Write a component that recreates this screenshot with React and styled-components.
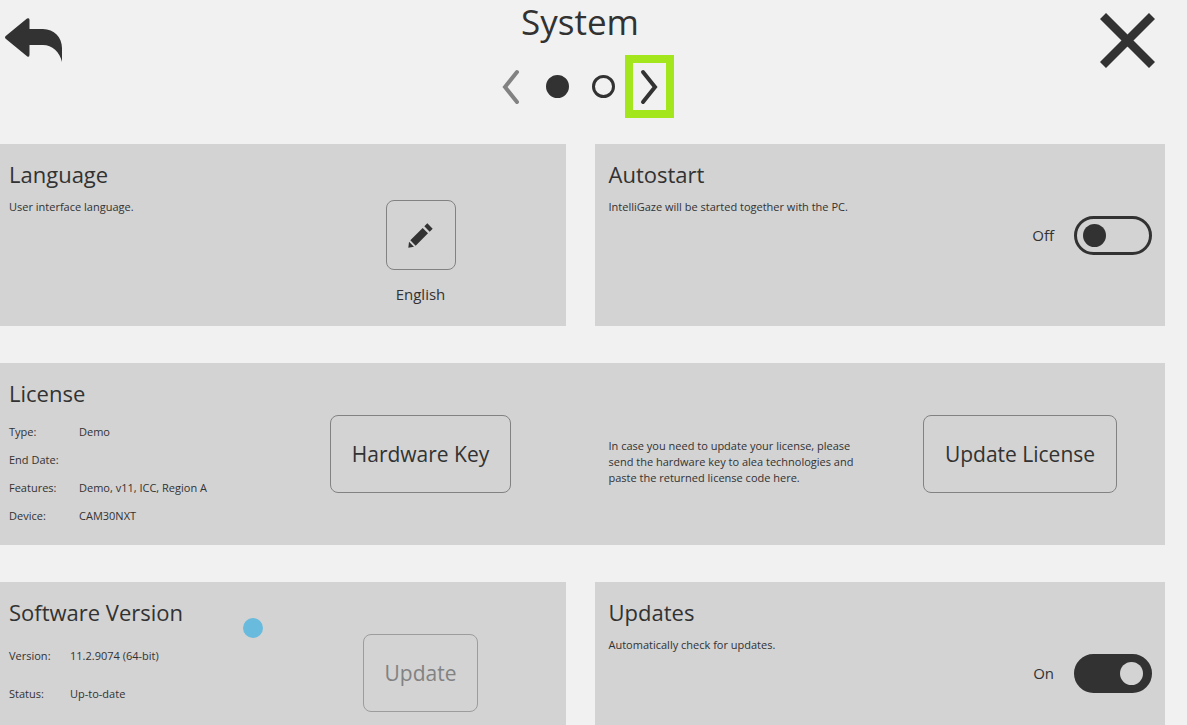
import * as React from "react"
import styled, { createGlobalStyle } from "styled-components"

const GlobalStyle = createGlobalStyle`
  :root {
    --color-page: #f1f1f1;
    --color-card: #d3d3d3;
    --color-ink: #323232;
    --color-muted: #828282;
    --color-highlight: #a4e61c;
    --color-gaze: #69bbdd;
  }

  * {
    box-sizing: border-box;
  }

  body {
    margin: 0;
    background: var(--color-page);
    color: var(--color-ink);
    font-family: "Open Sans", "Noto Sans", sans-serif;
    font-size: 11px;
    line-height: 16px;
  }

  button {
    font-family: inherit;
    color: inherit;
    cursor: pointer;
  }
`

const Page = styled.div`
  position: relative;
  height: 100vh;
  overflow: hidden;
`

const Header = styled.header`
  display: grid;
  grid-template-columns: 1fr auto 1fr;
  align-items: start;
  min-height: 144px;
  padding-right: 27px;
`

const Title = styled.h1`
  margin: 0;
  font-size: 35px;
  line-height: 44px;
  font-weight: 400;
  text-align: center;
`

const IconButton = styled.button`
  display: flex;
  justify-self: ${(props) => props.$side};
  padding: ${(props) => (props.$side === "end" ? "13px 5px" : "18px 5px")};
  border: 0;
  background: none;
`

const Pager = styled.nav`
  display: grid;
  grid-template-columns: repeat(4, 46px);
  place-items: center;
  height: 63px;
  margin-top: 11px;
`

const PagerArrow = styled.button`
  display: flex;
  align-items: center;
  justify-content: center;
  width: 33px;
  height: 47px;
  padding: 0;
  border: 0;
  background: none;
  outline: ${(props) =>
    props.$active ? "8px solid var(--color-highlight)" : "none"};

  &:disabled {
    color: var(--color-muted);
  }
`

const PagerDot = styled.button`
  width: 23px;
  height: 23px;
  padding: 0;
  border: 3px solid var(--color-ink);
  border-radius: 50%;
  background: ${(props) => (props.$current ? "var(--color-ink)" : "none")};
`

const Cards = styled.main`
  display: grid;
  grid-template-columns: 566fr 571fr;
  gap: 37px 29px;
  padding-right: 22px;
`

const Card = styled.section`
  display: grid;
  grid-column: ${(props) => (props.$wide ? "span 2" : "auto")};
  grid-template-columns: ${(props) => (props.$wide ? "subgrid" : "1fr")};
  min-height: 182px;
  background: var(--color-card);
`

const Half = styled.div`
  display: grid;
  grid-template-columns: minmax(0, 1fr) ${(props) =>
      props.$toggle ? "auto" : "290px"};
  padding-left: ${(props) => (props.$right ? "14px" : "9px")};
`

const Info = styled.div`
  padding-top: 15px;
`

const Heading = styled.h2`
  margin: 0 0 10px;
  font-size: 22px;
  line-height: 30px;
  font-weight: 400;
`

const Text = styled.p`
  margin: 0;
`

const Note = styled.p`
  max-width: 255px;
  margin: 0;
  padding-top: 75px;
`

const Details = styled.dl`
  display: grid;
  grid-template-columns: ${(props) => props.$label} 1fr;
  margin: 0;
  line-height: ${(props) => props.$row};

  dd {
    margin: 0;
  }
`

const Action = styled.div`
  display: flex;
  align-items: center;
  justify-content: center;
`

const Choice = styled.div`
  display: flex;
  flex-direction: column;
  align-items: center;
  gap: 12px;
  padding-top: 56px;
  font-size: 15px;
  line-height: 24px;
`

const OutlineButton = styled.button`
  display: flex;
  align-items: center;
  justify-content: center;
  min-width: 70px;
  height: ${(props) => (props.$icon ? "70px" : "78px")};
  padding: 0 21px;
  border: 1px solid var(--color-muted);
  border-radius: 8px;
  background: none;
  font-size: 21px;
  line-height: 30px;

  &:disabled {
    border-color: #9c9c9c;
    color: var(--color-muted);
  }
`

const Toggle = styled.label`
  display: flex;
  align-items: center;
  gap: 20px;
  padding-right: 13px;
  font-size: 15px;
  line-height: 24px;
`

const Switch = styled.input`
  appearance: none;
  display: flex;
  align-items: center;
  width: 78px;
  height: 39px;
  margin: 0;
  padding: 0 6px;
  border: 3px solid var(--color-ink);
  border-radius: 20px;
  cursor: pointer;

  &::before {
    width: 23px;
    height: 23px;
    border-radius: 50%;
    background: var(--color-ink);
    content: "";
  }

  &:checked {
    justify-content: flex-end;
    background: var(--color-ink);
  }

  &:checked::before {
    background: var(--color-card);
  }
`

const GazeCursor = styled.div`
  position: absolute;
  top: 618px;
  left: 243px;
  width: 20px;
  height: 20px;
  border-radius: 50%;
  background: var(--color-gaze);
  pointer-events: none;
`

const BackIcon = () => (
  <svg width="57" height="44" viewBox="0 0 57 44" fill="currentColor">
    <path d="M1 17.800 22 .6Q24.500-.8 24.500 2V11H38C49 11 57 19.500 57 30V44C55 34 47 27 38 27H24.500V36.500Q24.500 40 22 38.200L1 21Q-1 19.400 1 17.800Z" />
  </svg>
)

const CloseIcon = () => (
  <svg width="55" height="55" viewBox="0 0 55 55" stroke="currentColor">
    <path d="M3 3 52 52M52 3 3 52" strokeWidth="8.500" />
  </svg>
)

const Chevron = ({ d }) => (
  <svg
    width="18"
    height="36"
    viewBox="0 0 18 36"
    fill="none"
    stroke="currentColor"
    strokeWidth="4"
    strokeLinecap="round"
  >
    <path d={d} />
  </svg>
)

const PencilIcon = () => (
  <svg width="25" height="25" viewBox="0 0 75 75" fill="currentColor">
    <path d="M58 1 74 17 65 26 49 10ZM44 15 60 31 23 68 7 52ZM3 56 18 71 1 74Z" />
  </svg>
)

const ToggleSetting = ({ id, title, text, initial }) => {
  const [on, setOn] = React.useState(initial)

  return (
    <Card>
      <Half $right $toggle>
        <Info>
          <Heading>{title}</Heading>
          <Text>{text}</Text>
        </Info>
        <Toggle htmlFor={id}>
          {on ? "On" : "Off"}
          <Switch
            id={id}
            type="checkbox"
            checked={on}
            onChange={(e) => setOn(e.target.checked)}
          />
        </Toggle>
      </Half>
    </Card>
  )
}

const DetailList = ({ label, row, items }) => (
  <Details $label={label} $row={row}>
    {items.map(([name, value]) => (
      <React.Fragment key={name}>
        <dt>{name}:</dt>
        <dd>{value}</dd>
      </React.Fragment>
    ))}
  </Details>
)

const license = [
  ["Type", "Demo"],
  ["End Date", ""],
  ["Features", "Demo, v11, ICC, Region A"],
  ["Device", "CAM30NXT"],
]

const software = [
  ["Version", "11.2.9074 (64-bit)"],
  ["Status", "Up-to-date"],
]

const App = () => {
  return (
    <Page>
      <GlobalStyle />
      <Header>
        <IconButton $side="start" aria-label="Back">
          <BackIcon />
        </IconButton>
        <div>
          <Title>System</Title>
          <Pager aria-label="Pages">
            <PagerArrow disabled aria-label="Previous page">
              <Chevron d="M15 3 3 18 15 33" />
            </PagerArrow>
            <PagerDot $current aria-label="Page 1" />
            <PagerDot aria-label="Page 2" />
            <PagerArrow $active aria-label="Next page">
              <Chevron d="M3 3 15 18 3 33" />
            </PagerArrow>
          </Pager>
        </div>
        <IconButton $side="end" aria-label="Close">
          <CloseIcon />
        </IconButton>
      </Header>

      <Cards>
        <Card>
          <Half>
            <Info>
              <Heading>Language</Heading>
              <Text>User interface language.</Text>
            </Info>
            <Choice>
              <OutlineButton $icon aria-label="Change language">
                <PencilIcon />
              </OutlineButton>
              <span>English</span>
            </Choice>
          </Half>
        </Card>

        <ToggleSetting
          id="autostart"
          title="Autostart"
          text="IntelliGaze will be started together with the PC."
          initial={false}
        />

        <Card $wide>
          <Half>
            <Info>
              <Heading>License</Heading>
              <DetailList label="70px" row="28px" items={license} />
            </Info>
            <Action>
              <OutlineButton>Hardware Key</OutlineButton>
            </Action>
          </Half>
          <Half $right>
            <Note>
              In case you need to update your license, please send the hardware
              key to alea technologies and paste the returned license code here.
            </Note>
            <Action>
              <OutlineButton>Update License</OutlineButton>
            </Action>
          </Half>
        </Card>

        <Card>
          <Half>
            <Info>
              <Heading>Software Version</Heading>
              <DetailList label="61px" row="38px" items={software} />
            </Info>
            <Action>
              <OutlineButton disabled>Update</OutlineButton>
            </Action>
          </Half>
        </Card>

        <ToggleSetting
          id="updates"
          title="Updates"
          text="Automatically check for updates."
          initial={true}
        />
      </Cards>

      <GazeCursor />
    </Page>
  )
}

export default App
